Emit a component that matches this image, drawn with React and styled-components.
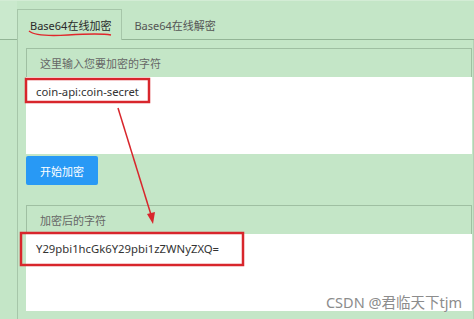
import React from "react";
import styled, { createGlobalStyle } from "styled-components";

const GlobalStyle = createGlobalStyle`
  html, body {
    margin: 0;
    padding: 0;
    background: #c4e6c7;
  }
  body {
    font-family: "Noto Sans", "Noto Sans CJK SC", sans-serif;
  }
`;

const Page = styled.div`
  position: relative;
  width: 474px;
  height: 319px;
  overflow: hidden;
  background: #c4e6c7;
`;

const TabBar = styled.ul`
  display: flex;
  margin: 0;
  padding: 8px 0 0 17px;
  list-style: none;
  height: 30px;
  border-top: 1px solid #d3ecd5;
  border-bottom: 1px solid #93b596;
  background: linear-gradient(to right, #cae9cd 17px, #c4e6c7 17px);
`;

const Tab = styled.li`
  position: relative;
  display: flex;
  align-items: center;
  height: ${(p) => (p.$active ? "31px" : "30px")};
  margin-bottom: ${(p) => (p.$active ? "-1px" : "0")};
  padding: ${(p) => (p.$active ? "0 10px 0 12px" : "0 11px")};
  box-sizing: border-box;
  border: 1px solid ${(p) => (p.$active ? "#a6c6a9" : "transparent")};
  border-bottom: none;
  background: #c4e6c7;
  font-size: 11px;
  color: ${(p) => (p.$active ? "#2a2a2a" : "#555")};
  white-space: nowrap;
`;

const Scribble = styled.svg`
  position: absolute;
  left: 10px;
  top: 19px;
  overflow: visible;
`;

const Body = styled.div`
  display: flex;
  flex-direction: column;
  margin-left: 17px;
  height: 280px;
  padding: 8px 1px 0 8px;
  border-left: 1px solid #a6c6a9;
  border-right: 1px solid #b3d1b5;
`;

const Field = styled.section`
  display: flex;
  flex-direction: column;
`;

const FieldHead = styled.div`
  height: 28px;
  display: flex;
  align-items: center;
  padding-left: 13px;
  border: 1px solid #9fbfa2;
  border-bottom: none;
  background: #c4e6c7;
  font-size: 11px;
  color: #666;
`;

const FieldBox = styled.div`
  height: 77px;
  box-sizing: border-box;
  padding: 7px 10px;
  background: #fff;
  font-size: 11.3px;
  color: #333;
`;

const Button = styled.button`
  align-self: flex-start;
  width: 72px;
  height: 29px;
  margin: 2px 0 20px;
  border: none;
  border-radius: 2px;
  background: #2899f5;
  color: #fff;
  font-family: inherit;
  font-size: 11px;
`;

const Overlay = styled.svg`
  position: absolute;
  left: 0;
  top: 0;
  pointer-events: none;
`;

const Watermark = styled.div`
  position: absolute;
  right: 12px;
  bottom: 7px;
  font-size: 14.5px;
  color: #8c8c8c;
  text-shadow: 0 0 1px #fff;
  white-space: nowrap;
`;

export default function App() {
  return (
    <>
      <GlobalStyle />
      <Page>
        <TabBar>
          <Tab $active>
            Base64在线加密
            <Scribble width="84" height="8">
              <path d="M1 2 Q8 8 40 6 T83 6" fill="none" stroke="#e0262b" strokeWidth="1.4" />
            </Scribble>
          </Tab>
          <Tab>Base64在线解密</Tab>
        </TabBar>
        <Body>
          <Field>
            <FieldHead>这里输入您要加密的字符</FieldHead>
            <FieldBox>coin-api:coin-secret</FieldBox>
          </Field>
          <Button>开始加密</Button>
          <Field>
            <FieldHead>加密后的字符</FieldHead>
            <FieldBox>Y29pbi1hcGk6Y29pbi1zZWNyZXQ=</FieldBox>
          </Field>
        </Body>
        <Overlay width="474" height="319">
          <rect x="26" y="79" width="123" height="23" fill="none" stroke="#d8262c" strokeWidth="2.5" />
          <rect x="21" y="233" width="222" height="32" fill="none" stroke="#d8262c" strokeWidth="2.5" />
          <line x1="118" y1="108" x2="152" y2="218" stroke="#d8262c" strokeWidth="1.5" />
          <path d="M147 214 L153 224 L155 212 Z" fill="#d8262c" />
        </Overlay>
        <Watermark>CSDN @君临天下tjm</Watermark>
      </Page>
    </>
  );
}
